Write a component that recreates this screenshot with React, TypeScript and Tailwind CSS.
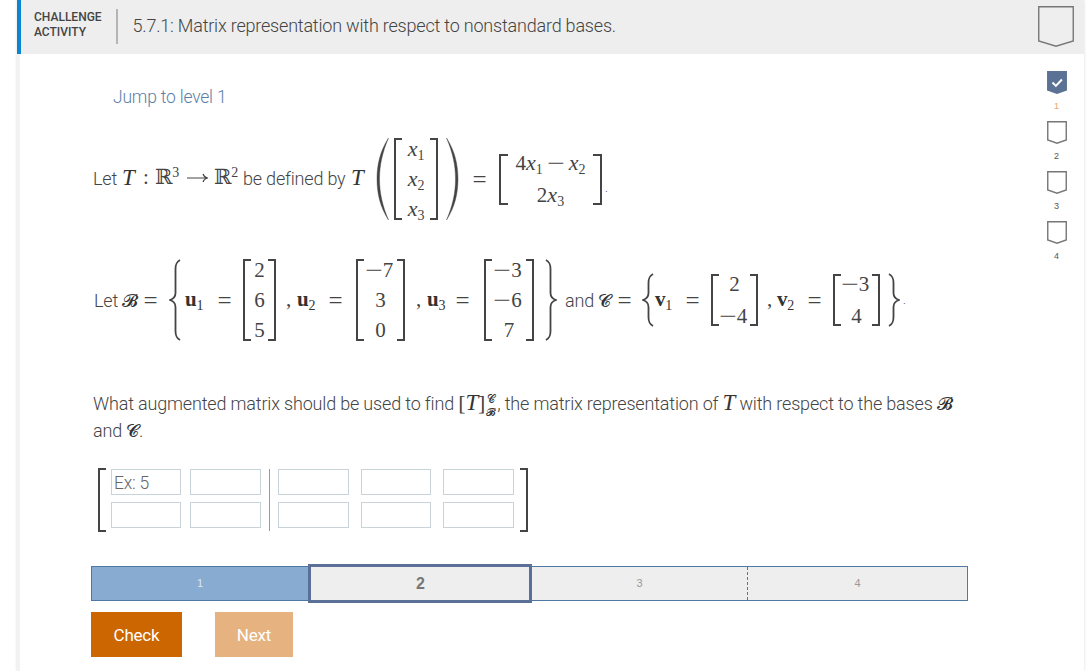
import type { ReactNode } from "react";

const serif = "font-['Liberation_Serif','DejaVu_Serif',serif]";
const sup = "text-[14px] relative top-[4px]";

function Shield({ w, h, tip, filled, clear }: { w: number; h: number; tip: number; filled?: boolean; clear?: boolean }) {
  return (
    <svg width={w} height={h} viewBox={`0 0 ${w} ${h}`} className="block">
      <path
        d={`M.75 .75H${w - 0.75}V${h - tip}L${w / 2} ${h - 0.75}L.75 ${h - tip}Z`}
        fill={filled ? "#5b7294" : clear ? "none" : "#fff"}
        stroke={filled ? "#5b7294" : "#777"}
        strokeWidth="1.4"
      />
      {filled && <path d="M5.5 11.5l3.4 3.4 6-6.4" fill="none" stroke="#fff" strokeWidth="2" />}
    </svg>
  );
}

// side of a matrix: pass the height and width as classes
function Bracket({ right, className }: { right?: boolean; className: string }) {
  return (
    <div className={`shrink-0 border-y-2 border-[#444] ${right ? "border-r-2" : "border-l-2"} ${className}`} />
  );
}

function Brace({ right, h }: { right?: boolean; h: number }) {
  const m = h / 2;
  return (
    <svg width="12" height={h} viewBox={`0 0 12 ${h}`} className={`shrink-0 ${right ? "-scale-x-100" : ""}`}>
      <path
        d={`M11 1C7.5 3 6.5 5 6.5 10V${m - 7}C6.5 ${m - 3} 4 ${m - 1} 1 ${m}C4 ${m + 1} 6.5 ${m + 3} 6.5 ${m + 7}V${h - 10}C6.5 ${h - 5} 7.5 ${h - 3} 11 ${h - 1}`}
        fill="none"
        stroke="#444"
        strokeWidth="1.8"
      />
    </svg>
  );
}

function Paren({ right }: { right?: boolean }) {
  return (
    <svg width="15" height="84" viewBox="0 0 15 84" className={`shrink-0 ${right ? "-scale-x-100" : ""}`}>
      <path d="M13.5 1C5 14 2 28 2 42s3 28 11.5 41C7.5 69 4.5 56 4.5 42S7.5 15 13.5 1Z" fill="#444" stroke="#444" strokeWidth=".4" />
    </svg>
  );
}

function I({ children, className = "" }: { children: ReactNode; className?: string }) {
  return <span className={`${serif} italic font-normal text-[23px] leading-none text-[#333] ${className}`}>{children}</span>;
}

function Script({ children }: { children: ReactNode }) {
  return <span className={`${serif} font-normal text-[18px] leading-none text-[#333]`}>{children}</span>;
}

function X({ n }: { n: number }) {
  return (
    <span className={`${serif} text-[#444]`}>
      <span className="italic text-[22px]">x</span>
      <span className={sup}>{n}</span>
    </span>
  );
}

function Bold({ c, n, className }: { c: string; n: number; className: string }) {
  return (
    <div className={`${serif} text-[#333] whitespace-nowrap shrink-0 ${className}`}>
      <span className="font-bold text-[21px]">{c}</span>
      <span className={sup}>{n}</span>
    </div>
  );
}

function Eq({ className = "" }: { className?: string }) {
  return <div className={`${serif} w-[15px] shrink-0 text-center text-[25px] leading-none text-[#444] ${className}`}>=</div>;
}

function Minus({ className = "" }: { className?: string }) {
  return <span className={`inline-block scale-x-150 ${className}`}>−</span>;
}

function Comma({ className }: { className: string }) {
  return <div className={`${serif} shrink-0 text-[21px] text-[#444] ${className}`}>,</div>;
}

function Num({ t }: { t: string }) {
  if (t.startsWith("−")) {
    return (
      <>
        <Minus className="mr-[3px]" />
        {t.slice(1)}
      </>
    );
  }
  return <>{t}</>;
}

function Cell({ placeholder }: { placeholder?: string }) {
  return (
    <div className="h-[26px] border border-[#c9d3da] bg-white pl-[2px] text-[17.5px] tracking-[-0.2px] leading-[26px] font-light text-[#666]">
      {placeholder}
    </div>
  );
}

export default function App() {
  return (
    <div className="w-[1092px] h-[671px] overflow-hidden bg-white font-['Roboto',sans-serif] text-[#444]">
      <div className="ml-[17px] w-[1067px] h-full bg-white flex flex-col shadow-[0_0_3px_#ddd]">
        <header className="h-[54px] shrink-0 bg-[#eeeeee] border-l-[4px] border-[#0a85d1] flex items-center pl-[13px] pr-[10px]">
          <div className="w-[82px] text-[12px] leading-[15px] font-medium text-[#444] mt-[-4px]">
            CHALLENGE
            <br />
            ACTIVITY
          </div>
          <div className="w-[1.5px] h-[35px] bg-[#b5b5b5] mt-[-1px]" />
          <h1 className="ml-[15px] text-[18px] tracking-[-0.2px] font-light text-[#444] mt-[-4px]">
            5.7.1: Matrix representation with respect to nonstandard bases.
          </h1>
          <div className="ml-auto mt-[-2px]">
            <Shield w={36} h={41} tip={6} clear />
          </div>
        </header>

        <div className="flex flex-1 border-l-[3px] border-[#f2f2f2]">
          <main className="flex-1 pl-[71px] font-light text-[18px] tracking-[-0.2px]">
            <div className="mt-[31px] pl-[22px] h-[23px] leading-[24px] text-[17.5px] text-[#5b7ea6]">
              Jump to level 1
            </div>

            <div className="mt-[29px] h-[84px] pl-[2px] flex items-center whitespace-nowrap">
              <div className="flex items-center pb-[2px] shrink-0">
                <div className="w-[29px] shrink-0">Let</div>
                <div className="w-[21px] shrink-0"><I>T</I></div>
                <div className={`${serif} w-[12px] shrink-0 text-[21px]`}>:</div>
                <div className={`${serif} w-[32px] shrink-0 text-[21px] text-[#444]`}>
                  ℝ<sup className="text-[14px]">3</sup>
                </div>
                <div className="w-[27px] shrink-0">
                  <svg width="21" height="10" viewBox="0 0 21 10" className="block">
                    <path d="M0 5h20M16 1c.6 2 2 3.300 4.500 4C18 5.700 16.600 7 16 9" fill="none" stroke="#444" strokeWidth="1.1" />
                  </svg>
                </div>
                <div className={`${serif} w-[29px] shrink-0 text-[21px] text-[#444]`}>
                  ℝ<sup className="text-[14px]">2</sup>
                </div>
                <div className="w-[108px] shrink-0">be defined by</div>
                <div className="w-[24px] shrink-0"><I>T</I></div>
              </div>
              <Paren />
              <div className="w-[4px] shrink-0" />
              <Bracket className="w-[8px] h-[82px]" />
              <div className="w-[28px] shrink-0 flex flex-col items-center">
                <div className="h-[30px] leading-[30px]"><X n={1} /></div>
                <div className="h-[30px] leading-[30px]"><X n={2} /></div>
                <div className="h-[30px] leading-[30px]"><X n={3} /></div>
              </div>
              <Bracket right className="w-[8px] h-[82px]" />
              <div className="w-[7px] shrink-0" />
              <Paren right />
              <Eq className="ml-[12px]" />
              <Bracket className="ml-[12px] w-[9px] h-[51px]" />
              <div className={`${serif} w-[85px] shrink-0 text-[21px] text-center text-[#444] leading-[28px] tracking-normal`}>
                <div className="h-[32px]">
                  4<span className="italic text-[22px]">x</span>
                  <span className={sup}>1</span>
                  <Minus className="mx-[7px]" />
                  <span className="italic text-[22px]">x</span>
                  <span className={sup}>2</span>
                </div>
                <div className="h-[28px]">
                  2<span className="italic text-[22px]">x</span>
                  <span className={sup}>3</span>
                </div>
              </div>
              <Bracket right className="w-[9px] h-[51px]" />
              <span className="ml-[3px] self-end mb-[24px] text-[12px]">.</span>
            </div>

            <div className="mt-[38px] h-[82px] pl-[3px] flex items-center whitespace-nowrap">
              <div className="w-[28px] shrink-0">Let</div>
              <div className="w-[21px] shrink-0"><Script>𝓑</Script></div>
              <Eq />
              <div className="ml-[11px]"><Brace h={82} /></div>
              <Bold c="u" n={1} className="ml-[4px] w-[32px]" />
              <Eq />
              <Bracket className="ml-[11px] w-[8px] h-[82px]" />
              <div className={`${serif} w-[17px] shrink-0 text-[21px] text-[#444] text-center leading-[30px] tracking-normal`}>
                <div>2</div>
                <div>6</div>
                <div>5</div>
              </div>
              <Bracket right className="w-[8px] h-[82px]" />
              <Comma className="w-[21px] pl-[10px]" />
              <Bold c="u" n={2} className="w-[31px]" />
              <Eq />
              <Bracket className="ml-[13px] w-[8px] h-[82px]" />
              <div className={`${serif} w-[33px] shrink-0 text-[21px] text-[#444] text-center leading-[30px] tracking-normal`}>
                <div><Num t="−7" /></div>
                <div>3</div>
                <div>0</div>
              </div>
              <Bracket right className="w-[8px] h-[82px]" />
              <Comma className="w-[22px] pl-[11px]" />
              <Bold c="u" n={3} className="w-[28px]" />
              <Eq />
              <Bracket className="ml-[14px] w-[8px] h-[82px]" />
              <div className={`${serif} w-[34px] shrink-0 text-[21px] text-[#444] text-center leading-[30px] tracking-normal`}>
                <div><Num t="−3" /></div>
                <div><Num t="−6" /></div>
                <div>7</div>
              </div>
              <Bracket right className="w-[8px] h-[82px]" />
              <div className="ml-[11px]"><Brace right h={82} /></div>
              <div className="ml-[8px] w-[33px] shrink-0">and</div>
              <div className="w-[19px] shrink-0"><Script>𝓒</Script></div>
              <Eq />
              <div className="ml-[10px]"><Brace h={54} /></div>
              <Bold c="v" n={1} className="ml-[1px] w-[30px]" />
              <Eq />
              <Bracket className="ml-[11px] w-[8px] h-[52px]" />
              <div className={`${serif} w-[31px] shrink-0 text-[21px] text-[#444] text-center leading-[32px] tracking-normal`}>
                <div>2</div>
                <div><Num t="−4" /></div>
              </div>
              <Bracket right className="w-[8px] h-[52px]" />
              <Comma className="w-[19px] pl-[9px]" />
              <Bold c="v" n={2} className="w-[30px]" />
              <Eq />
              <Bracket className="ml-[11px] w-[8px] h-[52px]" />
              <div className={`${serif} w-[31px] shrink-0 text-[21px] text-[#444] text-center leading-[32px] tracking-normal`}>
                <div><Num t="−3" /></div>
                <div>4</div>
              </div>
              <Bracket right className="w-[8px] h-[52px]" />
              <div className="ml-[8px]"><Brace right h={54} /></div>
              <span className="ml-[3px] text-[12px]">.</span>
            </div>

            <p className="mt-[49px] ml-[2px] w-[880px] h-[53px] leading-[27px] tracking-[-0.17px] text-[#444]">
              What augmented matrix should be used to find{" "}
              <span className={`${serif} text-[22px] leading-none text-[#444]`}>
                [<I>T</I>]
              </span>
              <span className={`${serif} inline-flex flex-col h-[8px] align-[7px] w-[12px] text-center text-[11px] leading-[13px] text-[#333]`}>
                <span>𝓒</span>
                <span>𝓑</span>
              </span>
              , the matrix representation of <I>T</I> with respect to the bases <Script>𝓑</Script>
              <br />
              and <Script>𝓒</Script>.
            </p>

            <div className="mt-[25px] flex items-start">
              <Bracket className="ml-[7px] w-[8px] h-[64px]" />
              <div className="ml-[5px] mt-[1px] grid grid-cols-[70px_71px] gap-x-[9px] gap-y-[7px]">
                <Cell placeholder="Ex: 5" />
                <Cell />
                <Cell />
                <Cell />
              </div>
              <div className="mx-[8px] w-px h-[62px] mt-[1px] bg-[#999]" />
              <div className="mt-[1px] grid grid-cols-[71px_70px_71px] gap-x-[12px] gap-y-[7px]">
                <Cell />
                <Cell />
                <Cell />
                <Cell />
                <Cell />
                <Cell />
              </div>
              <Bracket right className="ml-[6px] w-[8px] h-[64px]" />
            </div>

            <div className="mt-[34px] w-[877px] h-[35px] flex items-center border border-[#5078a5] bg-[#eeeeee] text-[11px] font-normal tracking-normal text-[#999] font-['Liberation_Sans',sans-serif]">
              <div className="w-[216px] h-full bg-[#87abd1] flex items-center justify-center text-[#dde6f0]">1</div>
              <div className="w-[224px] h-[39px] shrink-0 border-[3px] border-[#5a7096] flex items-center justify-center pl-[1px] text-[16px] font-bold text-[#777]">
                2
              </div>
              <div className="w-[216px] h-full border-r border-dashed border-[#5078a5] flex items-center justify-center">3</div>
              <div className="flex-1 h-full flex items-center justify-center">4</div>
            </div>

            <div className="mt-[11px] flex gap-[33px] text-white text-[17px] font-normal">
              <div className="w-[91px] h-[45px] pt-[2px] bg-[#cc6600] flex items-center justify-center">Check</div>
              <div className="w-[78px] h-[45px] pt-[2px] bg-[#e5b280] flex items-center justify-center">Next</div>
            </div>
          </main>

          <aside className="w-[55px] shrink-0 pt-[17px] flex flex-col items-center font-['Liberation_Sans',sans-serif] text-[9px] text-[#555]">
            {[1, 2, 3, 4].map((n) => (
              <div key={n} className="h-[50px] flex flex-col items-center">
                <Shield w={20} h={23} tip={4} filled={n === 1} />
                <div className={`mt-[6px] leading-[12px] ${n === 1 ? "text-[#e8a56a]" : ""}`}>{n}</div>
              </div>
            ))}
          </aside>
        </div>
      </div>
    </div>
  );
}
